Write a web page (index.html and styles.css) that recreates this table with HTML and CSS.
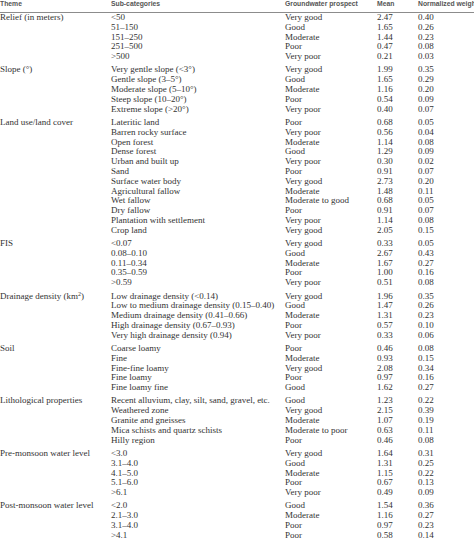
FILE: index.html
```html
<!DOCTYPE html>
<html>
<head>
<meta charset="utf-8">
<link rel="stylesheet" href="styles.css">
</head>
<body>
<table class="data">
<thead>
<tr><th class="c1">Theme</th><th class="c2">Sub-categories</th><th class="c3">Groundwater prospect</th><th class="c4">Mean</th><th class="c5">Normalized weight</th></tr>
</thead>
<tbody>
<tr><td>Relief (in meters)</td><td>&lt;50</td><td>Very good</td><td>2.47</td><td>0.40</td></tr>
<tr><td></td><td>51–150</td><td>Good</td><td>1.65</td><td>0.26</td></tr>
<tr><td></td><td>151–250</td><td>Moderate</td><td>1.44</td><td>0.23</td></tr>
<tr><td></td><td>251–500</td><td>Poor</td><td>0.47</td><td>0.08</td></tr>
<tr><td></td><td>&gt;500</td><td>Very poor</td><td>0.21</td><td>0.03</td></tr>
</tbody>
<tbody>
<tr><td>Slope (°)</td><td>Very gentle slope (&lt;3°)</td><td>Very good</td><td>1.99</td><td>0.35</td></tr>
<tr><td></td><td>Gentle slope (3–5°)</td><td>Good</td><td>1.65</td><td>0.29</td></tr>
<tr><td></td><td>Moderate slope (5–10°)</td><td>Moderate</td><td>1.16</td><td>0.20</td></tr>
<tr><td></td><td>Steep slope (10–20°)</td><td>Poor</td><td>0.54</td><td>0.09</td></tr>
<tr><td></td><td>Extreme slope (&gt;20°)</td><td>Very poor</td><td>0.40</td><td>0.07</td></tr>
</tbody>
<tbody>
<tr><td>Land use/land cover</td><td>Lateritic land</td><td>Poor</td><td>0.68</td><td>0.05</td></tr>
<tr><td></td><td>Barren rocky surface</td><td>Very poor</td><td>0.56</td><td>0.04</td></tr>
<tr><td></td><td>Open forest</td><td>Moderate</td><td>1.14</td><td>0.08</td></tr>
<tr><td></td><td>Dense forest</td><td>Good</td><td>1.29</td><td>0.09</td></tr>
<tr><td></td><td>Urban and built up</td><td>Very poor</td><td>0.30</td><td>0.02</td></tr>
<tr><td></td><td>Sand</td><td>Poor</td><td>0.91</td><td>0.07</td></tr>
<tr><td></td><td>Surface water body</td><td>Very good</td><td>2.73</td><td>0.20</td></tr>
<tr><td></td><td>Agricultural fallow</td><td>Moderate</td><td>1.48</td><td>0.11</td></tr>
<tr><td></td><td>Wet fallow</td><td>Moderate to good</td><td>0.68</td><td>0.05</td></tr>
<tr><td></td><td>Dry fallow</td><td>Poor</td><td>0.91</td><td>0.07</td></tr>
<tr><td></td><td>Plantation with settlement</td><td>Very poor</td><td>1.14</td><td>0.08</td></tr>
<tr><td></td><td>Crop land</td><td>Very good</td><td>2.05</td><td>0.15</td></tr>
</tbody>
<tbody>
<tr><td>FIS</td><td>&lt;0.07</td><td>Very good</td><td>0.33</td><td>0.05</td></tr>
<tr><td></td><td>0.08–0.10</td><td>Good</td><td>2.67</td><td>0.43</td></tr>
<tr><td></td><td>0.11–0.34</td><td>Moderate</td><td>1.67</td><td>0.27</td></tr>
<tr><td></td><td>0.35–0.59</td><td>Poor</td><td>1.00</td><td>0.16</td></tr>
<tr><td></td><td>&gt;0.59</td><td>Very poor</td><td>0.51</td><td>0.08</td></tr>
</tbody>
<tbody>
<tr><td>Drainage density (km<sup>2</sup>)</td><td>Low drainage density (&lt;0.14)</td><td>Very good</td><td>1.96</td><td>0.35</td></tr>
<tr><td></td><td>Low to medium drainage density (0.15–0.40)</td><td>Good</td><td>1.47</td><td>0.26</td></tr>
<tr><td></td><td>Medium drainage density (0.41–0.66)</td><td>Moderate</td><td>1.31</td><td>0.23</td></tr>
<tr><td></td><td>High drainage density (0.67–0.93)</td><td>Poor</td><td>0.57</td><td>0.10</td></tr>
<tr><td></td><td>Very high drainage density (0.94)</td><td>Very poor</td><td>0.33</td><td>0.06</td></tr>
</tbody>
<tbody>
<tr><td>Soil</td><td>Coarse loamy</td><td>Poor</td><td>0.46</td><td>0.08</td></tr>
<tr><td></td><td>Fine</td><td>Moderate</td><td>0.93</td><td>0.15</td></tr>
<tr><td></td><td>Fine-fine loamy</td><td>Very good</td><td>2.08</td><td>0.34</td></tr>
<tr><td></td><td>Fine loamy</td><td>Poor</td><td>0.97</td><td>0.16</td></tr>
<tr><td></td><td>Fine loamy fine</td><td>Good</td><td>1.62</td><td>0.27</td></tr>
</tbody>
<tbody>
<tr><td>Lithological properties</td><td>Recent alluvium, clay, silt, sand, gravel, etc.</td><td>Good</td><td>1.23</td><td>0.22</td></tr>
<tr><td></td><td>Weathered zone</td><td>Very good</td><td>2.15</td><td>0.39</td></tr>
<tr><td></td><td>Granite and gneisses</td><td>Moderate</td><td>1.07</td><td>0.19</td></tr>
<tr><td></td><td>Mica schists and quartz schists</td><td>Moderate to poor</td><td>0.63</td><td>0.11</td></tr>
<tr><td></td><td>Hilly region</td><td>Poor</td><td>0.46</td><td>0.08</td></tr>
</tbody>
<tbody>
<tr><td>Pre-monsoon water level</td><td>&lt;3.0</td><td>Very good</td><td>1.64</td><td>0.31</td></tr>
<tr><td></td><td>3.1–4.0</td><td>Good</td><td>1.31</td><td>0.25</td></tr>
<tr><td></td><td>4.1–5.0</td><td>Moderate</td><td>1.15</td><td>0.22</td></tr>
<tr><td></td><td>5.1–6.0</td><td>Poor</td><td>0.67</td><td>0.13</td></tr>
<tr><td></td><td>&gt;6.1</td><td>Very poor</td><td>0.49</td><td>0.09</td></tr>
</tbody>
<tbody>
<tr><td>Post-monsoon water level</td><td>&lt;2.0</td><td>Good</td><td>1.54</td><td>0.36</td></tr>
<tr><td></td><td>2.1–3.0</td><td>Moderate</td><td>1.16</td><td>0.27</td></tr>
<tr><td></td><td>3.1–4.0</td><td>Poor</td><td>0.97</td><td>0.23</td></tr>
<tr><td></td><td>&gt;4.1</td><td>Poor</td><td>0.58</td><td>0.14</td></tr>
</tbody>
</table>
</body>
</html>
```
FILE: styles.css
```css
html, body {
  margin: 0;
  padding: 0;
  background: #fff;
  overflow: hidden;
}
.data {
  border-collapse: collapse;
  table-layout: fixed;
  width: 520px;
  font-family: "Liberation Serif", "Times New Roman", serif;
  font-size: 9px;
  color: #333;
}
.data th {
  font-family: "Liberation Sans", Arial, sans-serif;
  font-weight: bold;
  font-size: 6.8px;
  color: #555;
  text-align: left;
  padding: 0 0 4px 0;
  height: 8px;
  line-height: 8px;
  border-bottom: 1.5px solid #8c8c8c;
  white-space: nowrap;
  overflow: visible;
}
.data .c1 { width: 111px; }
.data .c2 { width: 174px; }
.data .c3 { width: 92px; }
.data .c4 { width: 41px; }
.data td {
  padding: 0;
  line-height: 9.8px;
  height: 9.8px;
  white-space: nowrap;
  overflow: visible;
  vertical-align: middle;
}
.data tbody + tbody tr:first-child td {
  padding-top: 3.5px;
}
.data sup {
  font-size: 6px;
  line-height: 0;
  vertical-align: 3px;
}
```
